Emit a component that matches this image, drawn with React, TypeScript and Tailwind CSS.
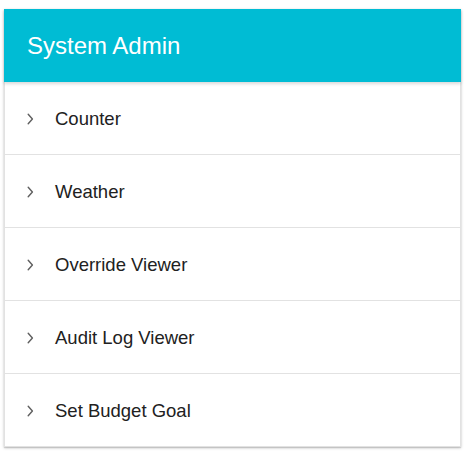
import React from "react";

const items = ["Counter", "Weather", "Override Viewer", "Audit Log Viewer", "Set Budget Goal"];

function Chevron() {
  return (
    <svg width="8" height="12" viewBox="0 0 8 12" className="shrink-0">
      <path d="M2.2 1.2 L6.4 6 L2.2 10.8" fill="none" stroke="#5f5f5f" strokeWidth="1.4" strokeLinecap="round" strokeLinejoin="round" />
    </svg>
  );
}

export default function App() {
  return (
    <div className="w-[474px] h-[460px] bg-white pt-[9px] pl-[4px]" style={{ fontFamily: '"Liberation Sans", Arial, sans-serif' }}>
      <div className="w-[457px] bg-white border-x border-b border-[#e2e2e2] shadow-[0_1px_3px_rgba(0,0,0,0.2),0_1px_1px_rgba(0,0,0,0.12)]">
        <div className="relative h-[73px] -mx-px bg-[#00bcd4] flex items-center pl-[23px] text-white text-[24px] shadow-[0_2px_3px_rgba(0,0,0,0.15)]">
          System Admin
        </div>
        {items.map((label, i) => (
          <div
            key={label}
            className={`flex items-center pl-[21px] pt-[1px] ${i > 0 ? "h-[73px] border-t border-[#e2e2e2]" : "h-[72px]"}`}
          >
            <Chevron />
            <span className="ml-[21px] text-[18.5px] text-[#212121]">{label}</span>
          </div>
        ))}
      </div>
    </div>
  );
}
